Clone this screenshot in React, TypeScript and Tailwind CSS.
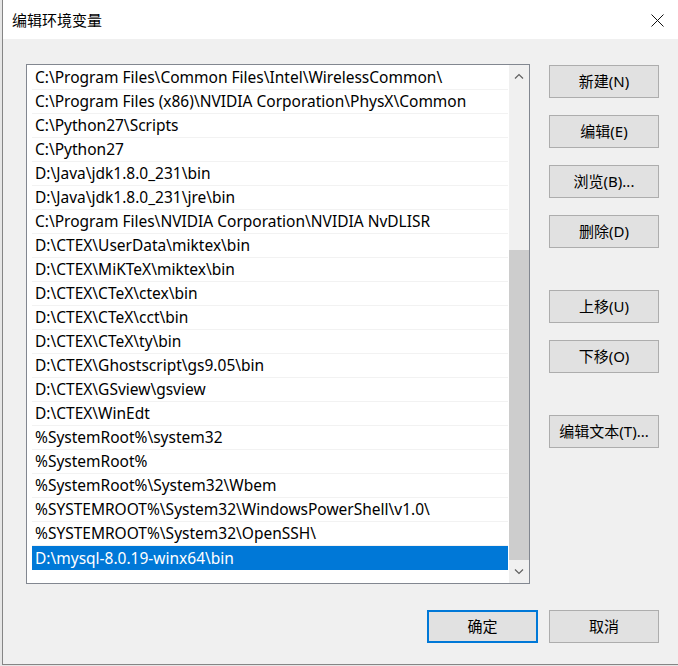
import type { ReactNode } from "react";

const paths = [
  "C:\\Program Files\\Common Files\\Intel\\WirelessCommon\\",
  "C:\\Program Files (x86)\\NVIDIA Corporation\\PhysX\\Common",
  "C:\\Python27\\Scripts",
  "C:\\Python27",
  "D:\\Java\\jdk1.8.0_231\\bin",
  "D:\\Java\\jdk1.8.0_231\\jre\\bin",
  "C:\\Program Files\\NVIDIA Corporation\\NVIDIA NvDLISR",
  "D:\\CTEX\\UserData\\miktex\\bin",
  "D:\\CTEX\\MiKTeX\\miktex\\bin",
  "D:\\CTEX\\CTeX\\ctex\\bin",
  "D:\\CTEX\\CTeX\\cct\\bin",
  "D:\\CTEX\\CTeX\\ty\\bin",
  "D:\\CTEX\\Ghostscript\\gs9.05\\bin",
  "D:\\CTEX\\GSview\\gsview",
  "D:\\CTEX\\WinEdt",
  "%SystemRoot%\\system32",
  "%SystemRoot%",
  "%SystemRoot%\\System32\\Wbem",
  "%SYSTEMROOT%\\System32\\WindowsPowerShell\\v1.0\\",
  "%SYSTEMROOT%\\System32\\OpenSSH\\",
  "D:\\mysql-8.0.19-winx64\\bin",
];

const selectedIndex = paths.length - 1;

function DialogButton({
  children,
  isDefault = false,
  className = "",
}: {
  children: ReactNode;
  isDefault?: boolean;
  className?: string;
}) {
  return (
    <button
      className={
        "h-[33px] flex items-center justify-center bg-[#e1e1e1] text-[15px] text-black " +
        (isDefault ? "border-2 border-[#0078d7] " : "border border-[#adadad] ") +
        className
      }
    >
      {children}
    </button>
  );
}

function Chevron({ up }: { up?: boolean }) {
  return (
    <svg width="10" height="6" viewBox="0 0 10 6" className="block">
      <path
        d={up ? "M1 5.5 L5 1.5 L9 5.5" : "M1 0.5 L5 4.5 L9 0.5"}
        fill="none"
        stroke="#606060"
        strokeWidth="1.2"
      />
    </svg>
  );
}

export default function App() {
  return (
    <div className="w-[678px] h-[666px] bg-[#e6e6e6] pl-[2px] font-['Noto_Sans','Noto_Sans_CJK_SC',sans-serif] text-black">
      <div className="w-[676px] h-[665px] flex flex-col bg-[#f0f0f0] border-l border-b border-[#858585]">
        {/* title bar */}
        <div className="h-[39px] bg-white flex items-center justify-between pl-[9px] pr-[14px] pt-[1px]">
          <span className="text-[15px]">编辑环境变量</span>
          <svg width="13" height="13" viewBox="0 0 13 13">
            <path d="M0.5 0.5 L12.5 12.5 M12.5 0.5 L0.5 12.5" stroke="#111" strokeWidth="1" />
          </svg>
        </div>

        <div className="flex flex-col pl-[23px] pt-[25px]">
          <div className="flex gap-[19px]">
            {/* path list */}
            <div className="w-[504px] h-[520px] border border-[#828790] bg-white flex">
              <div className="flex-1 pl-[5px] pr-[1px] pt-[1px]">
                {paths.map((p, i) => (
                  <div
                    key={i}
                    className={
                      "h-[24px] flex items-center pl-[3px] pt-[1px] text-[15.5px] whitespace-nowrap overflow-hidden " +
                      (i === selectedIndex
                        ? "bg-[#0078d7] text-white"
                        : "border-b border-[#f2f2f2]")
                    }
                  >
                    {p}
                  </div>
                ))}
              </div>
              <div className="w-[20px] bg-[#f0f0f0] flex flex-col">
                <div className="h-[21px] flex items-center justify-center">
                  <Chevron up />
                </div>
                <div className="h-[164px]" />
                <div className="h-[310px] bg-[#cdcdcd]" />
                <div className="flex-1 flex items-center justify-center">
                  <Chevron />
                </div>
              </div>
            </div>

            {/* action buttons */}
            <div className="w-[110px] flex flex-col pt-[1px]">
              <div className="flex flex-col gap-[17px]">
                <DialogButton>新建(N)</DialogButton>
                <DialogButton>编辑(E)</DialogButton>
                <DialogButton>浏览(B)...</DialogButton>
                <DialogButton>删除(D)</DialogButton>
              </div>
              <div className="flex flex-col gap-[17px] mt-[42px]">
                <DialogButton>上移(U)</DialogButton>
                <DialogButton>下移(O)</DialogButton>
              </div>
              <DialogButton className="mt-[42px]">编辑文本(T)...</DialogButton>
            </div>
          </div>

          <div className="flex gap-[11px] pl-[401px] mt-[26px]">
            <DialogButton isDefault className="w-[111px]">
              确定
            </DialogButton>
            <DialogButton className="w-[110px]">取消</DialogButton>
          </div>
        </div>
      </div>
    </div>
  );
}
